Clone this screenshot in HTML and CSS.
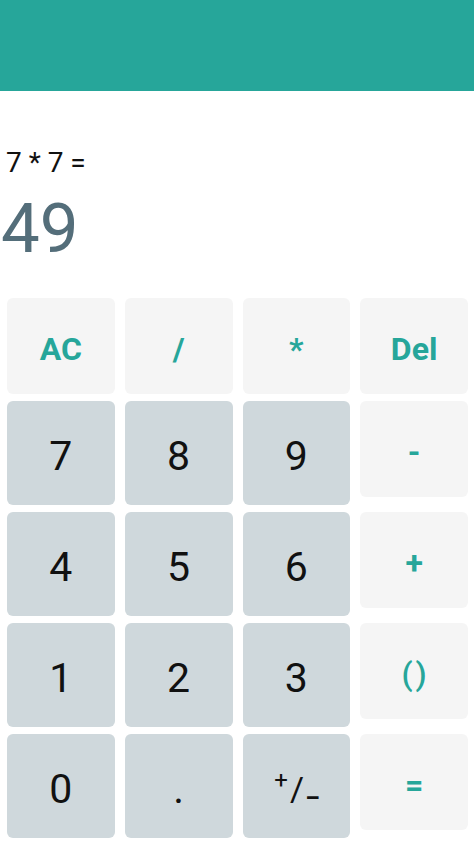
FILE: index.html
```html
<!DOCTYPE html>
<html lang="en">
<head>
  <meta charset="UTF-8">
  <meta name="viewport" content="width=device-width, initial-scale=1.0">
  <title>Calculator</title>
  <link rel="stylesheet" href="styles.css">
</head>
<body>
  <div class="app">
    <div class="toolbar"></div>

    <div class="display">
      <div class="expression">7 * 7 =</div>
      <div class="result">49</div>
    </div>

    <div class="keypad">
      <button class="key op">AC</button>
      <button class="key op">/</button>
      <button class="key op">*</button>
      <button class="key op">Del</button>

      <button class="key num">7</button>
      <button class="key num">8</button>
      <button class="key num">9</button>
      <button class="key op short">-</button>

      <button class="key num">4</button>
      <button class="key num">5</button>
      <button class="key num">6</button>
      <button class="key op short">+</button>

      <button class="key num">1</button>
      <button class="key num">2</button>
      <button class="key num">3</button>
      <button class="key op short paren">()</button>

      <button class="key num">0</button>
      <button class="key num">.</button>
      <button class="key num sign"><span class="sup">+</span>/<span class="sub">_</span></button>
      <button class="key op short">=</button>
    </div>
  </div>
</body>
</html>
```

FILE: styles.css
```css
html, body {
  margin: 0;
  padding: 0;
  background: #fff;
  font-family: Roboto, "Noto Sans", sans-serif;
}

.app {
  width: 474px;
  height: 842px;
  overflow: hidden;
}

.toolbar {
  height: 91px;
  background: #26a69a;
}

.display {
  padding-top: 56px;
}

.expression {
  font-size: 28px;
  line-height: 32px;
  color: #111;
  padding-left: 6px;
}

.result {
  margin-top: 12px;
  font-size: 69px;
  line-height: 76px;
  color: #546e7a;
  padding-left: 1px;
}

.keypad {
  margin-top: 31px;
  padding: 0 6px 0 7px;
  display: grid;
  grid-template-columns: repeat(4, 1fr);
  grid-template-rows: 96px repeat(4, 104px);
  column-gap: 10px;
  row-gap: 7px;
}

.key {
  border: none;
  border-radius: 6px;
  padding: 5px 0 0;
  margin: 0;
  font-family: Roboto, "Noto Sans", sans-serif;
  display: flex;
  align-items: center;
  justify-content: center;
  cursor: pointer;
}

.num {
  background: #cfd8dc;
  color: #111;
  font-size: 41px;
  font-weight: 400;
}

.op {
  background: #f5f5f5;
  color: #26a69a;
  font-size: 32px;
  font-weight: 700;
  height: 96px;
}

.op.short {
  align-self: start;
}

.op.paren {
  font-weight: 500;
  letter-spacing: 3px;
  padding-left: 3px;
}

.sign {
  font-size: 34px;
}

.sign .sup {
  font-size: 24px;
  position: relative;
  top: -9px;
  margin-right: 2px;
}

.sign .sub {
  font-size: 26px;
  font-weight: 700;
  position: relative;
  top: -2px;
  margin-left: 3px;
}
```
